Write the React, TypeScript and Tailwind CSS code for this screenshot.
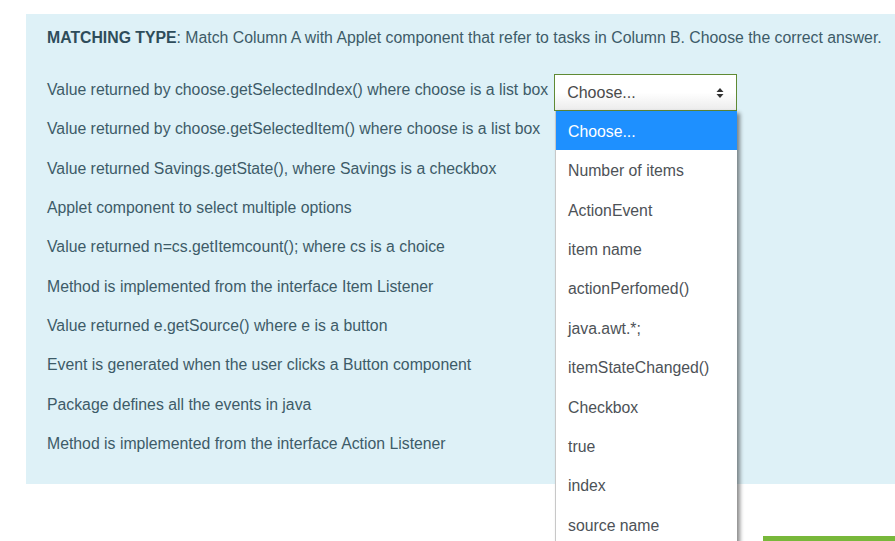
import React from "react";

const rows = [
  "Value returned by choose.getSelectedIndex() where choose is a list box",
  "Value returned by choose.getSelectedItem() where choose is a list box",
  "Value returned Savings.getState(), where Savings is a checkbox",
  "Applet component to select multiple options",
  "Value returned n=cs.getItemcount(); where cs is a choice",
  "Method is implemented from the interface Item Listener",
  "Value returned e.getSource() where e is a button",
  "Event is generated when the user clicks a Button component",
  "Package defines all the events in java",
  "Method is implemented from the interface Action Listener",
];

const options = [
  "Choose...",
  "Number of items",
  "ActionEvent",
  "item name",
  "actionPerfomed()",
  "java.awt.*;",
  "itemStateChanged()",
  "Checkbox",
  "true",
  "index",
  "source name",
];

export default function App() {
  return (
    <div
      className="relative w-[895px] h-[541px] overflow-hidden bg-white text-[#3d5b68]"
      style={{ fontFamily: '"Liberation Sans", Arial, sans-serif' }}
    >
      <div className="ml-[26px] mt-[14px] w-[900px] h-[470px] bg-[#def1f7] pl-[21px] pt-[15px]">
        <div className="text-[15.8px] leading-[18px]">
          <span className="font-bold text-[#2e4d5b]">MATCHING TYPE</span>: Match Column A with Applet component that
          refer to tasks in Column B. Choose the correct answer.
        </div>
        <div className="mt-[32px] flex flex-col">
          {rows.map((r, i) => (
            <div key={i} className="h-[39.35px] flex items-start">
              <span className="text-[15.8px] leading-[18px] pt-[2px]">{r}</span>
              {i === 0 && (
                <div className="ml-[6px] -mt-[5px] w-[183px] h-[37px] shrink-0 border border-[#5f8a34] bg-gradient-to-b from-white via-white to-[#ececec] flex items-center justify-between pl-[12px] pr-[12px] pt-[1px]">
                  <span className="text-[16px] text-[#4a4a4a]">Choose...</span>
                  <svg width="8" height="12" viewBox="0 0 8 12">
                    <path d="M4 1 L7.5 5 H0.5 Z" fill="#333" />
                    <path d="M4 11 L7.5 7 H0.5 Z" fill="#333" />
                  </svg>
                </div>
              )}
            </div>
          ))}
        </div>
      </div>
      <div className="ml-[763px] mt-[52px] h-[10px] bg-[#78b83a]" />

      <div className="absolute left-[555px] top-[111px] w-[182px] bg-white shadow-[3px_2px_4px_rgba(0,0,0,0.45)] border-l border-[#c8c8c8]">
        {options.map((o, i) => (
          <div
            key={i}
            className={
              "h-[39.4px] flex items-center pl-[12px] pt-[2px] text-[15.8px] " +
              (i === 0 ? "bg-[#1e90ff] text-white" : "text-[#4d5257]")
            }
          >
            {o}
          </div>
        ))}
      </div>
    </div>
  );
}
